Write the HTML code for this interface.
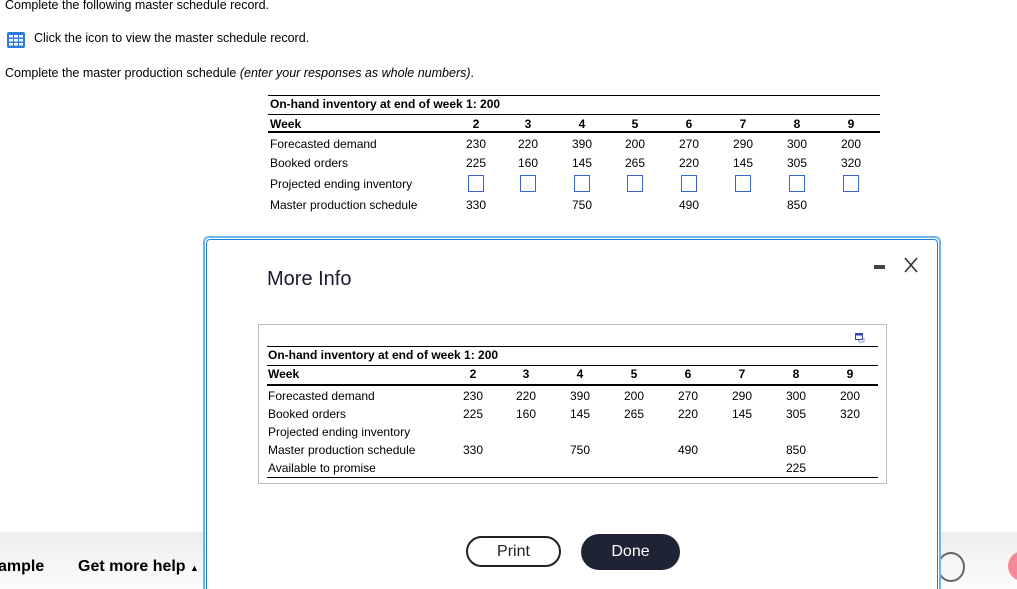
<!DOCTYPE html>
<html style="height:589px;overflow:hidden"><head><style>
html,body{height:589px;overflow:hidden}
body{margin:0;width:1017px;background:#fff;font-family:"Liberation Sans",Arial,sans-serif;color:#000;position:relative}
.a{position:absolute;white-space:nowrap}
.t{font-size:12px}
.c{position:absolute;transform:translateX(-50%);font-size:12px;white-space:nowrap}
.b{font-weight:bold}
.line{position:absolute;background:#000;height:1px}
.box{position:absolute;width:16px;height:17px;border:1px solid #3a63d6;box-sizing:border-box;background:#fff}
</style></head><body>
<div class="a" style="left:5px;top:-2px;font-size:12.5px">Complete the following master schedule record.</div>
<svg class="a" style="left:7px;top:32px" width="18" height="16"><rect x="0" y="0" width="18" height="16" rx="2" fill="#2a7be0"/><g fill="#fff"><rect x="2" y="3" width="4" height="2.5"/><rect x="7" y="3" width="4" height="2.5"/><rect x="12" y="3" width="4" height="2.5"/><rect x="2" y="7" width="4" height="2.5"/><rect x="7" y="7" width="4" height="2.5"/><rect x="12" y="7" width="4" height="2.5"/><rect x="2" y="11" width="4" height="2.5"/><rect x="7" y="11" width="4" height="2.5"/><rect x="12" y="11" width="4" height="2.5"/></g></svg>
<div class="a" style="left:34px;top:31px;font-size:12.5px">Click the icon to view the master schedule record.</div>
<div class="a" style="left:5px;top:66px;font-size:12.5px">Complete the master production schedule <i>(enter your responses as whole numbers)</i>.</div>

<div class="line" style="left:268px;top:95px;width:612px"></div>
<div class="a t b" style="left:270px;top:97px">On-hand inventory at end of week 1: 200</div>
<div class="line" style="left:268px;top:114px;width:612px"></div>
<div class="a t b" style="left:270px;top:117px">Week</div>
<div class="line" style="left:268px;top:131px;width:612px;height:2px"></div>
<div class="a t" style="left:270px;top:137px">Forecasted demand</div>
<div class="a t" style="left:270px;top:156px">Booked orders</div>
<div class="a t" style="left:270px;top:177px">Projected ending inventory</div>
<div class="a t" style="left:270px;top:198px">Master production schedule</div>

<div style="position:absolute;left:0;top:0">
<div class="c b" style="left:476px;top:117px">2</div><div class="c b" style="left:528px;top:117px">3</div><div class="c b" style="left:582px;top:117px">4</div><div class="c b" style="left:635px;top:117px">5</div><div class="c b" style="left:689px;top:117px">6</div><div class="c b" style="left:743px;top:117px">7</div><div class="c b" style="left:797px;top:117px">8</div><div class="c b" style="left:851px;top:117px">9</div>
<div class="c" style="left:476px;top:137px">230</div><div class="c" style="left:528px;top:137px">220</div><div class="c" style="left:582px;top:137px">390</div><div class="c" style="left:635px;top:137px">200</div><div class="c" style="left:689px;top:137px">270</div><div class="c" style="left:743px;top:137px">290</div><div class="c" style="left:797px;top:137px">300</div><div class="c" style="left:851px;top:137px">200</div>
<div class="c" style="left:476px;top:156px">225</div><div class="c" style="left:528px;top:156px">160</div><div class="c" style="left:582px;top:156px">145</div><div class="c" style="left:635px;top:156px">265</div><div class="c" style="left:689px;top:156px">220</div><div class="c" style="left:743px;top:156px">145</div><div class="c" style="left:797px;top:156px">305</div><div class="c" style="left:851px;top:156px">320</div>
<div class="box" style="left:468px;top:175px"></div><div class="box" style="left:520px;top:175px"></div><div class="box" style="left:574px;top:175px"></div><div class="box" style="left:627px;top:175px"></div><div class="box" style="left:681px;top:175px"></div><div class="box" style="left:735px;top:175px"></div><div class="box" style="left:789px;top:175px"></div><div class="box" style="left:843px;top:175px"></div>
<div class="c" style="left:476px;top:198px">330</div><div class="c" style="left:582px;top:198px">750</div><div class="c" style="left:689px;top:198px">490</div><div class="c" style="left:797px;top:198px">850</div>
</div>

<div style="position:absolute;left:0;top:532px;width:1017px;height:57px;background:linear-gradient(#eeeeee,#fbfbfb)"></div>
<div class="a b" style="left:-2px;top:558px;font-size:16px">ample</div>
<div class="a b" style="left:78px;top:558px;font-size:16px">Get more help <span style="font-size:9px">▲</span></div>
<div style="position:absolute;left:937px;top:552px;width:24px;height:26px;border:2px solid #666;border-radius:50%"></div>
<div style="position:absolute;left:1008px;top:551px;width:30px;height:30px;border-radius:50%;background:#f28a98"></div>

<div style="position:absolute;left:203px;top:236px;width:738px;height:353px;overflow:hidden">
<div style="position:absolute;left:0;top:0;width:738px;height:400px;border:2px solid #6ab4f0;border-radius:6px;box-sizing:border-box;background:#fff">
<div style="position:absolute;left:1px;top:1px;right:1px;bottom:0;border:1px solid #1d7fd6;border-radius:4px"></div>
</div>
</div>
<div class="a" style="left:267px;top:268px;font-size:20px;color:#1a1a2e">More Info</div>
<div style="position:absolute;left:874px;top:265px;width:11px;height:4px;background:#444"></div>
<svg class="a" style="left:904px;top:257px" width="14" height="16"><path d="M1 1L13 15M13 1L1 15" stroke="#333" stroke-width="1.6"/></svg>

<div style="position:absolute;left:258px;top:324px;width:629px;height:160px;border:1px solid #bbb;box-sizing:border-box"></div>
<svg class="a" style="left:855px;top:333px" width="10" height="10"><rect x="0.5" y="0.5" width="7" height="6" fill="#fff" stroke="#3344aa"/><rect x="0.5" y="0.5" width="7" height="2" fill="#3344aa"/><path d="M4 7v2h5v-4" fill="none" stroke="#8899cc"/></svg>
<div class="line" style="left:267px;top:346px;width:611px"></div>
<div class="a t b" style="left:268px;top:348px">On-hand inventory at end of week 1: 200</div>
<div class="line" style="left:267px;top:365px;width:611px"></div>
<div class="a t b" style="left:268px;top:367px">Week</div>
<div class="line" style="left:267px;top:384px;width:611px;height:2px"></div>
<div class="a t" style="left:268px;top:389px">Forecasted demand</div>
<div class="a t" style="left:268px;top:407px">Booked orders</div>
<div class="a t" style="left:268px;top:425px">Projected ending inventory</div>
<div class="a t" style="left:268px;top:443px">Master production schedule</div>
<div class="a t" style="left:268px;top:461px">Available to promise</div>
<div class="line" style="left:267px;top:477px;width:611px"></div>

<div class="c b" style="left:473px;top:367px">2</div><div class="c b" style="left:526px;top:367px">3</div><div class="c b" style="left:580px;top:367px">4</div><div class="c b" style="left:634px;top:367px">5</div><div class="c b" style="left:688px;top:367px">6</div><div class="c b" style="left:742px;top:367px">7</div><div class="c b" style="left:796px;top:367px">8</div><div class="c b" style="left:850px;top:367px">9</div>
<div class="c" style="left:473px;top:389px">230</div><div class="c" style="left:526px;top:389px">220</div><div class="c" style="left:580px;top:389px">390</div><div class="c" style="left:634px;top:389px">200</div><div class="c" style="left:688px;top:389px">270</div><div class="c" style="left:742px;top:389px">290</div><div class="c" style="left:796px;top:389px">300</div><div class="c" style="left:850px;top:389px">200</div>
<div class="c" style="left:473px;top:407px">225</div><div class="c" style="left:526px;top:407px">160</div><div class="c" style="left:580px;top:407px">145</div><div class="c" style="left:634px;top:407px">265</div><div class="c" style="left:688px;top:407px">220</div><div class="c" style="left:742px;top:407px">145</div><div class="c" style="left:796px;top:407px">305</div><div class="c" style="left:850px;top:407px">320</div>
<div class="c" style="left:473px;top:443px">330</div><div class="c" style="left:580px;top:443px">750</div><div class="c" style="left:688px;top:443px">490</div><div class="c" style="left:796px;top:443px">850</div>
<div class="c" style="left:796px;top:461px">225</div>

<div style="position:absolute;left:466px;top:536px;width:95px;height:31px;border:2px solid #222;border-radius:16px;box-sizing:border-box;text-align:center;line-height:27px;font-size:16px;color:#222">Print</div>
<div style="position:absolute;left:581px;top:534px;width:99px;height:36px;background:#1e2433;border-radius:18px;text-align:center;line-height:36px;font-size:16px;color:#fff">Done</div>
</body></html>
